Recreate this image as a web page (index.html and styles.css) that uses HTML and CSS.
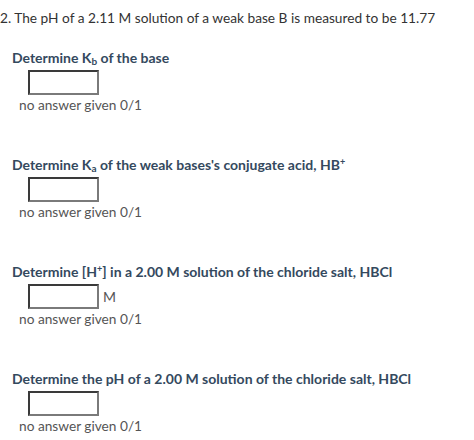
FILE: index.html
```html
<!DOCTYPE html>
<html>
<head>
<meta charset="utf-8">
<link rel="stylesheet" href="styles.css">
</head>
<body>
<div class="page">
  <p class="title">2. The pH of a 2.11 M solution of a weak base B is measured to be 11.77</p>

  <section class="part">
    <h3 class="q">Determine K<sub>b</sub> of the base</h3>
    <div class="answer"><span class="box"></span></div>
    <div class="status">no answer given 0/1</div>
  </section>

  <section class="part">
    <h3 class="q">Determine K<sub>a</sub> of the weak bases's conjugate acid, HB<sup>+</sup></h3>
    <div class="answer"><span class="box"></span></div>
    <div class="status">no answer given 0/1</div>
  </section>

  <section class="part">
    <h3 class="q">Determine [H<sup>+</sup>] in a 2.00 M solution of the chloride salt, HBCl</h3>
    <div class="answer"><span class="box"></span><span class="unit">M</span></div>
    <div class="status">no answer given 0/1</div>
  </section>

  <section class="part">
    <h3 class="q">Determine the pH of a 2.00 M solution of the chloride salt, HBCl</h3>
    <div class="answer"><span class="box"></span></div>
    <div class="status">no answer given 0/1</div>
  </section>
</div>
</body>
</html>
```
FILE: styles.css
```css
html, body {
  margin: 0;
  padding: 0;
  background: #ffffff;
}
.page {
  font-family: Lato, "Open Sans", sans-serif;
  padding: 10px 0 0 0;
  color: #333;
}
.title {
  margin: 0;
  font-size: 13.7px;
  line-height: 16px;
  color: #333;
}
.part {
  display: flex;
  flex-direction: column;
  padding-left: 12px;
  margin-top: 23px;
}
.part + .part {
  margin-top: 43px;
}
.q {
  margin: 0;
  font-size: 14px;
  line-height: 17px;
  font-weight: 700;
  color: #34495e;
}
.q sub {
  font-size: 10px;
  line-height: 0;
  vertical-align: -2px;
}
.q sup {
  font-size: 9px;
  line-height: 0;
  vertical-align: 5px;
}
.answer {
  display: flex;
  align-items: center;
  gap: 4px;
  margin: 4px 0 0 16px;
}
.box {
  width: 67px;
  height: 21px;
  border: 2px solid #3a3a3a;
  border-right-color: #7a7a7a;
  border-bottom-color: #7a7a7a;
  background: #fff;
}
.unit {
  font-size: 14px;
  color: #555;
}
.status {
  margin: 2px 0 0 7px;
  font-size: 13.7px;
  line-height: 16px;
  color: #555;
}
```
